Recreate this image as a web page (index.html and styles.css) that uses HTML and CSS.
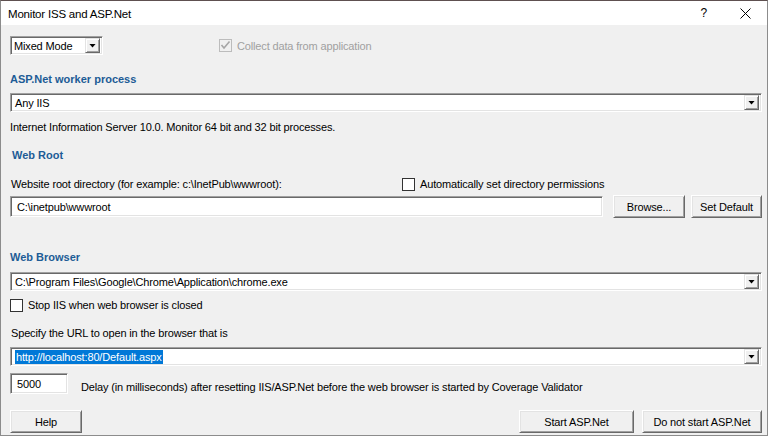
FILE: index.html
```html
<!DOCTYPE html>
<html lang="en">
<head>
    <meta charset="UTF-8">
    <meta name="viewport" content="width=device-width, initial-scale=1.0">
    <title>Monitor ISS and ASP.Net</title>
    <link rel="stylesheet" href="styles.css">
</head>
<body>
    <div class="window">
        <div class="titlebar">
            <span class="title">Monitor ISS and ASP.Net</span>
            <span class="help-btn">?</span>
            <span class="close-btn">
                <svg width="11" height="11" viewBox="0 0 11 11">
                    <path d="M0.5 0.5 L10.5 10.5 M10.5 0.5 L0.5 10.5" stroke="#000" stroke-width="1" fill="none"/>
                </svg>
            </span>
        </div>

        <div class="content">
            <div class="top-row">
                <div class="combo mode-combo">
                    <span class="value">Mixed Mode</span>
                    <span class="drop"></span>
                </div>
                <div class="check disabled collect">
                    <span class="box checked">
                        <svg width="11" height="11" viewBox="0 0 11 11">
                            <path d="M1.5 5 L4 8 L9.5 1.5" stroke="#a6a6a6" stroke-width="1.6" fill="none"/>
                        </svg>
                    </span>
                    <span>Collect data from application</span>
                </div>
            </div>

            <h2 class="section first">ASP.Net worker process</h2>
            <div class="combo wide mt7">
                <span class="value">Any IIS</span>
                <span class="drop"></span>
            </div>
            <p class="note">Internet Information Server 10.0. Monitor 64 bit and 32 bit processes.</p>

            <h2 class="section root">Web Root</h2>
            <div class="label-row">
                <span class="label">Website root directory (for example: c:\InetPub\wwwroot):</span>
                <div class="check">
                    <span class="box"></span>
                    <span>Automatically set directory permissions</span>
                </div>
            </div>
            <div class="input-row">
                <div class="field grow">C:\inetpub\wwwroot</div>
                <button class="btn browse">Browse...</button>
                <button class="btn set-default">Set Default</button>
            </div>

            <h2 class="section browser">Web Browser</h2>
            <div class="combo wide mt8">
                <span class="value">C:\Program Files\Google\Chrome\Application\chrome.exe</span>
                <span class="drop"></span>
            </div>
            <div class="check stop-iis">
                <span class="box"></span>
                <span>Stop IIS when web browser is closed</span>
            </div>

            <p class="note url-label">Specify the URL to open in the browser that is</p>
            <div class="combo wide mt7">
                <span class="value"><span class="selected">http://localhost:80/Default.aspx</span></span>
                <span class="drop"></span>
            </div>

            <div class="delay-row">
                <div class="field delay">5000</div>
                <span class="delay-text">Delay (in milliseconds) after resetting IIS/ASP.Net before the web browser is started by Coverage Validator</span>
            </div>

            <div class="button-row">
                <button class="btn">Help</button>
                <button class="btn start">Start ASP.Net</button>
                <button class="btn no-start">Do not start ASP.Net</button>
            </div>
        </div>
    </div>
</body>
</html>
```

FILE: styles.css
```css
* {
    margin: 0;
    padding: 0;
    box-sizing: border-box;
}

body {
    font-family: 'Liberation Sans', Arial, sans-serif;
    font-size: 11px;
    letter-spacing: -0.15px;
    color: #000;
    background: #f0f0f0;
}

.window {
    width: 768px;
    height: 436px;
    background: #f0f0f0;
    border: 1px solid #8c8c8c;
    border-top-color: #5e5050;
    overflow: hidden;
}

.titlebar {
    display: flex;
    align-items: center;
    height: 24px;
    background: #fff;
    padding-left: 7px;
}

.title {
    font-size: 11.5px;
    letter-spacing: -0.2px;
    padding-top: 1px;
}

.help-btn {
    margin-left: auto;
    font-size: 12px;
    margin-right: 33px;
}

.close-btn {
    display: flex;
    margin-right: 16px;
}

.content {
    padding: 0 5px 0 9px;
}

.top-row {
    display: flex;
    align-items: center;
    margin-top: 11px;
    height: 19px;
}

/* sunken combo / edit boxes */
.combo,
.field {
    display: flex;
    align-items: center;
    background: #fff;
    border-top: 1px solid #a0a0a0;
    border-left: 1px solid #a0a0a0;
    border-right: 1px solid #fff;
    border-bottom: 1px solid #fff;
    box-shadow: inset 1px 1px 0 #696969, inset -1px -1px 0 #e3e3e3;
    white-space: nowrap;
}

.combo {
    height: 19px;
    padding: 0 2px 0 4px;
}

.combo .value {
    flex: 1;
    padding-top: 1px;
}

.mode-combo {
    width: 93px;
    padding-left: 3px;
}

.mt7 { margin-top: 7px; }
.mt8 { margin-top: 8px; }

.drop {
    display: flex;
    align-items: center;
    justify-content: center;
    width: 15px;
    height: 15px;
    background: #f0f0f0;
    border-top: 1px solid #e3e3e3;
    border-left: 1px solid #e3e3e3;
    border-right: 1px solid #696969;
    border-bottom: 1px solid #696969;
    box-shadow: inset 1px 1px 0 #fff, inset -1px -1px 0 #a0a0a0;
}

.drop::after {
    content: '';
    width: 7px;
    height: 4px;
    background: #000;
    clip-path: polygon(0 0, 100% 0, 50% 100%);
}

.selected {
    background: #0078d7;
    color: #fff;
    padding: 1px 1px 1px 1px;
}

.field {
    height: 21px;
    padding: 0 5px 0 6px;
}

.grow {
    flex: 1;
}

.section {
    font-size: 11px;
    font-weight: bold;
    letter-spacing: 0;
    line-height: 14px;
    color: #1d5c96;
}

.section.first { margin-top: 17px; }
.section.root { margin-top: 14px; padding-left: 2px; }
.section.browser { margin-top: 32px; }

.note {
    line-height: 14px;
    margin-top: 8px;
}

.note.url-label {
    margin-top: 14px;
    padding-left: 1px;
}

/* check boxes */
.check {
    display: flex;
    align-items: center;
    gap: 5px;
    line-height: 14px;
}

.box {
    display: flex;
    align-items: center;
    justify-content: center;
    width: 13px;
    height: 13px;
    background: #fff;
    border: 1px solid #333;
}

.check.disabled {
    color: #a0a0a0;
}

.check.disabled .box {
    background: #f0f0f0;
    border-color: #bcbcbc;
}

.collect {
    margin-left: 116px;
}

.stop-iis {
    margin-top: 7px;
    height: 14px;
}

.label-row {
    display: grid;
    grid-template-columns: 392px 1fr;
    align-items: center;
    margin-top: 15px;
    height: 14px;
}

.label {
    padding-left: 1px;
}

.input-row {
    display: flex;
    align-items: center;
    margin-top: 4px;
    height: 23px;
}

/* raised buttons */
.btn {
    height: 23px;
    font-family: inherit;
    font-size: 11px;
    letter-spacing: -0.15px;
    color: #000;
    background: #f0f0f0;
    border-top: 1px solid #fff;
    border-left: 1px solid #fff;
    border-right: 1px solid #696969;
    border-bottom: 1px solid #696969;
    box-shadow: inset 1px 1px 0 #e3e3e3, inset -1px -1px 0 #a0a0a0;
    width: 72px;
}

.browse {
    margin-left: 10px;
}

.set-default {
    margin-left: 6px;
    width: 71px;
}

.delay-row {
    display: flex;
    align-items: center;
    margin-top: 7px;
    height: 21px;
}

.field.delay {
    width: 58px;
}

.delay-text {
    margin-left: 13px;
    padding-top: 6px;
}

.button-row {
    display: flex;
    margin-top: 16px;
}

.start {
    margin-left: auto;
    width: 115px;
}

.no-start {
    margin-left: 8px;
    width: 120px;
}
```
